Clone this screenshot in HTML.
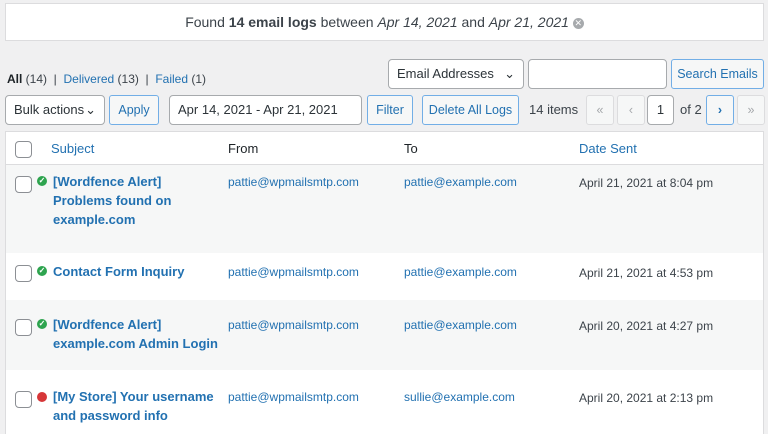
<!DOCTYPE html><html style="overflow:hidden;height:434px"><head><style>
body{margin:0;width:768px;height:434px;overflow:hidden;background:#f0f0f1;font-family:"Liberation Sans",sans-serif;font-size:13px;color:#3c434a;position:relative}
.a{position:absolute}
.box{background:#fff;border:1px solid #dcdcde}
.btn{position:absolute;border:1px solid #72aee6;color:#2271b1;background:#f6f7f7;border-radius:3px;font-size:12.5px;text-align:center;box-sizing:border-box;height:30px;line-height:28px}
.in{position:absolute;border:1px solid #a7aaad;background:#fff;border-radius:4px;box-sizing:border-box;height:30px;line-height:28px;padding-left:8px;font-size:13px;color:#2c3338}
.lnk{color:#2271b1}
.cb{position:absolute;left:15px;width:15px;height:15px;border:1px solid #8c8f94;border-radius:4px;background:#fff}
.subj{position:absolute;left:53px;color:#2271b1;font-weight:bold;line-height:19px;white-space:nowrap}
.fr{position:absolute;left:228px;color:#2271b1;font-size:12px}
.to{position:absolute;left:404px;color:#2271b1;font-size:12px}
.dt{position:absolute;left:579px;font-size:12px;color:#3c434a}
.ok{position:absolute;left:37px;width:10px;height:10px;border-radius:50%;background:#2ea44f;color:#fff;font-size:8px;line-height:10px;text-align:center;font-weight:bold}
</style></head><body>
<div class="a box" style="left:5px;top:3px;width:757px;height:36px;line-height:36px;text-align:center;font-size:14px">Found <b>14 email logs</b> between <i>Apr 14, 2021</i> and <i>Apr 21, 2021</i> <span style="display:inline-block;width:11px;height:11px;border-radius:50%;background:#a7aaad;color:#fff;font-size:9px;line-height:11px;vertical-align:1px">✕</span></div>
<div class="a" style="left:7px;top:72px;font-size:12px"><b style="color:#1d2327">All</b> (14) &nbsp;| &nbsp;<span class="lnk">Delivered</span> (13) &nbsp;| &nbsp;<span class="lnk">Failed</span> (1)</div>
<div class="in" style="left:388px;top:59px;width:136px">Email Addresses<span style="position:absolute;right:8px">⌄</span></div>
<div class="in" style="left:528px;top:59px;width:139px"></div>
<div class="btn" style="left:671px;top:59px;width:93px">Search Emails</div>
<div class="in" style="left:5px;top:95px;width:100px">Bulk actions<span style="position:absolute;right:8px">⌄</span></div>
<div class="btn" style="left:109px;top:95px;width:50px">Apply</div>
<div class="in" style="left:169px;top:95px;width:193px">Apr 14, 2021 - Apr 21, 2021</div>
<div class="btn" style="left:367px;top:95px;width:46px">Filter</div>
<div class="btn" style="left:422px;top:95px;width:97px">Delete All Logs</div>
<div class="a" style="left:529px;top:102px">14 items</div>
<div class="btn" style="left:586px;top:95px;width:28px;border-color:#dcdcde;color:#a7aaad">«</div>
<div class="btn" style="left:617px;top:95px;width:28px;border-color:#dcdcde;color:#a7aaad">‹</div>
<div class="in" style="left:647px;top:95px;width:27px;padding:0;text-align:center">1</div>
<div class="a" style="left:680px;top:102px">of 2</div>
<div class="btn" style="left:706px;top:95px;width:28px;font-weight:bold">›</div>
<div class="btn" style="left:737px;top:95px;width:28px;border-color:#dcdcde;color:#a7aaad">»</div>
<div class="a" style="left:5px;top:131px;width:757px;height:303px;background:#fff;border:1px solid #dcdcde;border-bottom:0"></div>
<div class="a" style="left:5px;top:132px;width:758px;height:32px;border-bottom:1px solid #dcdcde">
<div class="cb" style="left:10px;top:9px"></div>
<div class="a lnk" style="left:46px;top:9px">Subject</div>
<div class="a" style="left:223px;top:9px;color:#1d2327">From</div>
<div class="a" style="left:399px;top:9px;color:#1d2327">To</div>
<div class="a lnk" style="left:574px;top:9px">Date Sent</div></div>
<div class="a" style="left:6px;top:165px;width:757px;height:88px;background:#f6f7f7"></div>
<div class="a" style="left:6px;top:300px;width:757px;height:70px;background:#f6f7f7"></div>
<div class="cb" style="top:176px"></div><div class="ok" style="top:176px">✓</div>
<div class="subj" style="top:172px">[Wordfence Alert]<br>Problems found on<br>example.com</div>
<div class="fr" style="top:175px">pattie@wpmailsmtp.com</div><div class="to" style="top:175px">pattie@example.com</div><div class="dt" style="top:176px">April 21, 2021 at 8:04 pm</div>
<div class="cb" style="top:265px"></div><div class="ok" style="top:266px">✓</div>
<div class="subj" style="top:262px">Contact Form Inquiry</div>
<div class="fr" style="top:265px">pattie@wpmailsmtp.com</div><div class="to" style="top:265px">pattie@example.com</div><div class="dt" style="top:266px">April 21, 2021 at 4:53 pm</div>
<div class="cb" style="top:319px"></div><div class="ok" style="top:319px">✓</div>
<div class="subj" style="top:315px">[Wordfence Alert]<br>example.com Admin Login</div>
<div class="fr" style="top:318px">pattie@wpmailsmtp.com</div><div class="to" style="top:318px">pattie@example.com</div><div class="dt" style="top:319px">April 20, 2021 at 4:27 pm</div>
<div class="cb" style="top:391px"></div><div class="ok" style="top:392px;background:#d63638"></div>
<div class="subj" style="top:387px">[My Store] Your username<br>and password info</div>
<div class="fr" style="top:390px">pattie@wpmailsmtp.com</div><div class="to" style="top:390px">sullie@example.com</div><div class="dt" style="top:391px">April 20, 2021 at 2:13 pm</div>
</body></html>
